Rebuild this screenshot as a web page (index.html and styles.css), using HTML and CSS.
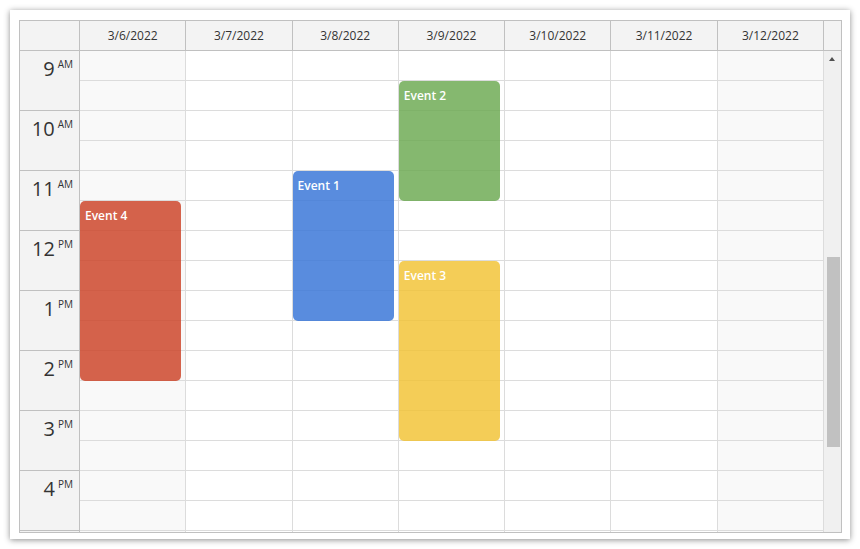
FILE: index.html
```html
<!DOCTYPE html>
<html>
	<head>
		<link rel="stylesheet" href="styles.css">
	</head>
	<body>
	<div class="card">
		<div class="calendar">

			<div class="header">
				<div class="corner"></div>
				<div class="day">3/6/2022</div>
				<div class="day">3/7/2022</div>
				<div class="day">3/8/2022</div>
				<div class="day">3/9/2022</div>
				<div class="day">3/10/2022</div>
				<div class="day">3/11/2022</div>
				<div class="day">3/12/2022</div>
				<div class="scroll-corner"></div>
			</div>

			<div class="body">
				<div class="times">
					<div class="hour"><span class="num">9</span><span class="ampm">AM</span></div>
					<div class="hour"><span class="num">10</span><span class="ampm">AM</span></div>
					<div class="hour"><span class="num">11</span><span class="ampm">AM</span></div>
					<div class="hour"><span class="num">12</span><span class="ampm">PM</span></div>
					<div class="hour"><span class="num">1</span><span class="ampm">PM</span></div>
					<div class="hour"><span class="num">2</span><span class="ampm">PM</span></div>
					<div class="hour"><span class="num">3</span><span class="ampm">PM</span></div>
					<div class="hour"><span class="num">4</span><span class="ampm">PM</span></div>
					<div class="hour"></div>
				</div>

				<div class="col weekend" id="d1">
					<div class="event red" style="top:150px;height:180px">Event 4</div>
				</div>
				<div class="col" id="d2"></div>
				<div class="col" id="d3">
					<div class="event blue" style="top:120px;height:150px">Event 1</div>
				</div>
				<div class="col" id="d4">
					<div class="event green" style="top:30px;height:120px">Event 2</div>
					<div class="event yellow" style="top:210px;height:180px">Event 3</div>
				</div>
				<div class="col" id="d5"></div>
				<div class="col" id="d6"></div>
				<div class="col weekend" id="d7"></div>

				<div class="scrollbar">
					<div class="arrow"></div>
					<div class="thumb"></div>
				</div>
			</div>

		</div>
	</div>

	<script>
		// half hour cells for each day column, 9 AM to 5 PM
		for(var d=1; d<8; d++){
			var col=document.getElementById("d"+d);
			for(var i=0; i<18; i++){
				var cell=document.createElement("div");
				cell.className="cell";
				col.insertBefore(cell, col.firstChild);
			}
		}
	</script>
	</body>
</html>
```

FILE: styles.css
```css
body{
	margin: 0;
	background-color: white;
	font-family: "Segoe UI", "Open Sans", sans-serif;
	color: #333;
}
.card{
	margin: 10px;
	width: 840px;
	height: 529px;
	box-sizing: border-box;
	padding: 10px 8px 6px 9px;
	background-color: white;
	box-shadow: 0 1px 6px rgba(0,0,0,0.45);
}
.calendar{
	border: 1px solid #c0c0c0;
	height: 513px;
	box-sizing: border-box;
	overflow: hidden;
}
.header{
	display: flex;
	height: 30px;
	box-sizing: border-box;
	background-color: #f3f3f3;
	border-bottom: 1px solid #c0c0c0;
}
.corner{
	width: 60px;
	flex: none;
	box-sizing: border-box;
	border-right: 1px solid #c0c0c0;
}
.day{
	flex: 1;
	border-right: 1px solid #c0c0c0;
	font-size: 12px;
	line-height: 29px;
	text-align: center;
}
.scroll-corner{
	width: 17px;
	flex: none;
}
.body{
	display: flex;
	height: 482px;
	overflow: hidden;
}
.times{
	width: 60px;
	flex: none;
	box-sizing: border-box;
	background-color: #f3f3f3;
	border-right: 1px solid #c0c0c0;
}
.hour{
	height: 60px;
	box-sizing: border-box;
	border-bottom: 1px solid #c0c0c0;
	text-align: right;
	padding-right: 6px;
	padding-top: 6px;
}
.num{
	font-size: 20px;
	line-height: 24px;
}
.ampm{
	font-size: 10px;
	vertical-align: top;
	margin-left: 3px;
}
.col{
	flex: 1;
	position: relative;
	border-right: 1px solid #dcdcdc;
	background-color: white;
}
.weekend{
	background-color: #f9f9f9;
}
.cell{
	height: 30px;
	box-sizing: border-box;
	border-bottom: 1px solid #dcdcdc;
}
.event{
	position: absolute;
	left: 0;
	right: 4px;
	box-sizing: border-box;
	border-radius: 5px;
	padding: 6px 5px;
	color: white;
	font-size: 12px;
	font-weight: 600;
}
.red{
	background-color: rgba(204,65,37,0.82);
}
.blue{
	background-color: rgba(60,120,216,0.85);
}
.green{
	background-color: rgba(106,168,79,0.82);
}
.yellow{
	background-color: rgba(241,194,50,0.82);
}
.scrollbar{
	width: 17px;
	flex: none;
	background-color: #f0f0f0;
	position: relative;
}
.arrow{
	position: absolute;
	top: 6px;
	left: 5px;
	width: 0;
	height: 0;
	border-left: 3.5px solid transparent;
	border-right: 3.5px solid transparent;
	border-bottom: 4px solid #505050;
}
.thumb{
	position: absolute;
	top: 206px;
	left: 3px;
	width: 13px;
	height: 190px;
	background-color: #c1c1c1;
}
```
